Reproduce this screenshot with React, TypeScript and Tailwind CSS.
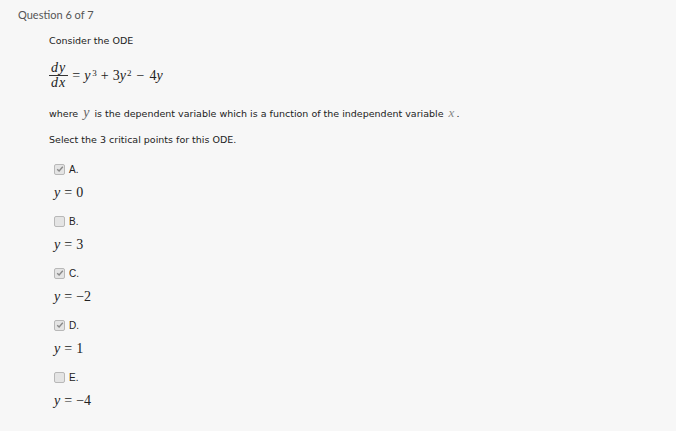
import React from "react";

const serif = { fontFamily: '"Liberation Serif", "DejaVu Serif", serif' };

function Check({ checked }: { checked: boolean }) {
  return (
    <span className="inline-flex h-[11px] w-[11px] items-center justify-center rounded-[2px] border border-[#b8b8b8] bg-[#e4e4e4]">
      {checked && (
        <svg width="8" height="8" viewBox="0 0 8 8">
          <path d="M1.2 4.2 L3.1 6 L6.8 1.8" fill="none" stroke="#8a8a8a" strokeWidth="1.4" />
        </svg>
      )}
    </span>
  );
}

function Option({ letter, checked, value }: { letter: string; checked: boolean; value: string }) {
  return (
    <div className="flex flex-col">
      <div className="flex h-[14px] items-center gap-[4px] pl-[5px]">
        <Check checked={checked} />
        <span className="text-[10px] text-[#222]" style={{ fontFamily: '"Liberation Sans", Arial, sans-serif' }}>{letter}.</span>
      </div>
      <div className="mt-[9px] flex h-[16px] items-center pl-[5px] text-[14px] leading-[16px] text-[#222]" style={serif}>
        <i className="italic">y</i>
        <span className="mx-[4px]">=</span>
        <span>{value}</span>
      </div>
    </div>
  );
}

export default function App() {
  const opts = [
    { l: "A", c: true, v: "0" },
    { l: "B", c: false, v: "3" },
    { l: "C", c: true, v: "\u22122" },
    { l: "D", c: true, v: "1" },
    { l: "E", c: false, v: "\u22124" },
  ];
  return (
    <div className="h-[431px] w-[676px] bg-[#f7f7f7] text-[#222]" style={{ fontFamily: '"DejaVu Sans", Verdana, sans-serif' }}>
      <div className="pl-[18px] pt-[7px] text-[11px] leading-[16px] text-[#555]" style={{ fontFamily: 'Lato, sans-serif' }}>
        Question 6 of 7
      </div>
      <div className="pl-[49px]">
        <div className="mt-[12px] text-[9.5px] leading-[12px]">Consider the ODE</div>
        <div className="mt-[15px] flex h-[27px] items-center text-[14px]" style={serif}>
          <div className="flex flex-col items-center">
            <span className="h-[12px] px-[2px] leading-[12px] tracking-[1px]"><i className="italic">dy</i></span>
            <span className="my-[1px] h-px w-full bg-[#333]" />
            <span className="h-[12px] px-[2px] leading-[12px] tracking-[1px]"><i className="italic">dx</i></span>
          </div>
          <span className="ml-[4px]">=</span>
          <span className="ml-[4px]"><i className="italic">y</i><sup className="ml-[2px] text-[9px]">3</sup></span>
          <span className="ml-[4px]">+</span>
          <span className="ml-[4px]">3<i className="italic">y</i><sup className="ml-[1px] text-[9px]">2</sup></span>
          <span className="ml-[5px]">−</span>
          <span className="ml-[5px]">4<i className="italic">y</i></span>
        </div>
        <div className="mt-[18px] text-[9.5px] leading-[12px]">
          where <span className="mx-[2px] text-[14px] text-[#666]" style={serif}><i className="italic">y</i></span> is the dependent variable which is a function of the independent variable <span className="mx-[2px] text-[13px] text-[#888]" style={serif}><i className="italic">x</i></span>.
        </div>
        <div className="mt-[14px] text-[9.5px] leading-[12px]">Select the 3 critical points for this ODE.</div>
        <div className="mt-[16px] flex flex-col gap-[13px]">
          {opts.map((o) => (
            <Option key={o.l} letter={o.l} checked={o.c} value={o.v} />
          ))}
        </div>
      </div>
    </div>
  );
}
